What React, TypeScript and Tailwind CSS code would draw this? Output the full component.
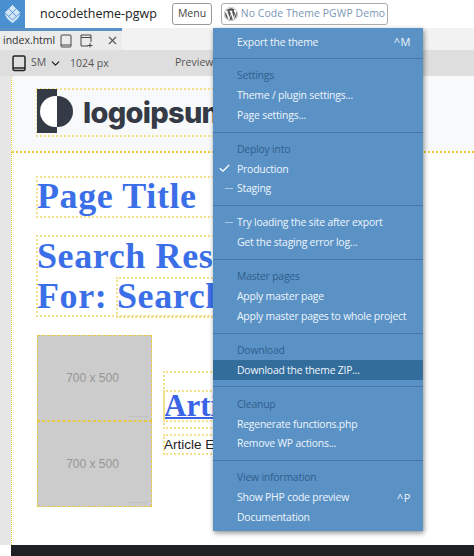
import { Check, ChevronDown, X } from "lucide-react";
import { FaWordpress } from "react-icons/fa";

type Row = { label: string; kind?: "head" | "check" | "dash" | "active"; key?: string };

const groups: Row[][] = [
  [{ label: "Export the theme", key: "^M" }],
  [
    { label: "Settings", kind: "head" },
    { label: "Theme / plugin settings..." },
    { label: "Page settings..." },
  ],
  [
    { label: "Deploy into", kind: "head" },
    { label: "Production", kind: "check" },
    { label: "Staging", kind: "dash" },
  ],
  [{ label: "Try loading the site after export", kind: "dash" }, { label: "Get the staging error log..." }],
  [
    { label: "Master pages", kind: "head" },
    { label: "Apply master page" },
    { label: "Apply master pages to whole project" },
  ],
  [{ label: "Download", kind: "head" }, { label: "Download the theme ZIP...", kind: "active" }],
  [
    { label: "Cleanup", kind: "head" },
    { label: "Regenerate functions.php" },
    { label: "Remove WP actions..." },
  ],
  [
    { label: "View information", kind: "head" },
    { label: "Show PHP code preview", key: "^P" },
    { label: "Documentation" },
  ],
];

function MenuRow({ row }: { row: Row }) {
  const color = row.kind === "head" ? "text-[#2f5f8c]" : "text-[#eef5fb]";
  const bg = row.kind === "active" ? "bg-[#336d9c]" : "";
  return (
    <div className={`relative flex h-[19.9px] items-center justify-between whitespace-nowrap pl-6 pr-3 pt-px text-[10.4px] tracking-[-0.2px] ${color} ${bg}`}>
      <span>{row.label}</span>
      {row.key && <span className="text-[11px] tracking-wider">{row.key}</span>}
      {row.kind === "check" && <Check size={13} strokeWidth={2.2} className="absolute left-[5px] top-[3px] text-white" />}
      {row.kind === "dash" && <span className="absolute left-[12px] top-[9px] h-px w-2 bg-[#a9c8e4]" />}
    </div>
  );
}

function ExportMenu() {
  return (
    <div className="absolute left-[213px] top-[28px] z-10 w-[210px] bg-[#5b92c6] pt-1 shadow-[1px_2px_5px_rgba(0,0,0,0.45)]">
      {groups.map((rows, i) => (
        <div
          key={i}
          className={i === 0 ? "pb-[6px]" : i === groups.length - 1 ? "border-t border-[#4578a8] pt-[6.5px] pb-[3.5px]" : "border-t border-[#4578a8] py-[6.5px]"}
        >
          {rows.map((row) => (
            <MenuRow key={row.label} row={row} />
          ))}
        </div>
      ))}
    </div>
  );
}

function PineLogo() {
  return (
    <div className="flex h-[28px] w-[25px] items-center justify-center bg-[#4a90d0]">
      <svg width="19" height="20" viewBox="0 0 19 20" fill="#d3e6f6" stroke="#4a90d0" strokeWidth="0.9">
        <path d="M9.5 0.5 L17.5 8.5 Q18 13.5 9.5 19.5 Q1 13.5 1.5 8.5 Z" />
        <path fill="none" d="M5.5 4.5 L13.5 12.5 M13.5 4.5 L5.5 12.5 M1.5 8.5 L9.5 16 L17.5 8.5" />
      </svg>
    </div>
  );
}

const dotted = "outline-2 -outline-offset-1 outline-dotted outline-[#f3e08a]";

function Placeholder() {
  return (
    <div className="relative flex h-[86px] w-[115px] items-center justify-center border border-dashed border-[#e8c840] bg-[#cccccc] text-xs text-[#969696]">
      <span className="-translate-x-[2px]">700 x 500</span>
      <span className="absolute bottom-[3px] right-[3px] h-px w-[20px] bg-[#c0c0c0]" />
    </div>
  );
}

function EditorPage() {
  return (
    <div className="h-[469px] overflow-hidden border-l border-dotted border-[#e8c840] bg-white font-['Liberation_Sans',sans-serif]">
      <div className="h-[75px] bg-[#f8f9fa] pl-[25px] pt-[13px]">
        <div className={`flex h-[47px] w-[300px] items-center ${dotted}`}>
          <div className="relative z-[1] flex h-[44px] w-5 shrink-0 items-center self-start bg-[#343a46]">
            <div className="ml-[3px] h-[31px] w-[17px] rounded-l-full bg-white" />
          </div>
          <div className="mb-[3px] h-[31px] w-[16px] shrink-0 rounded-r-full bg-[#343a46]" />
          <span className="ml-[10px] font-['Inter',sans-serif] text-[29px] leading-none font-extrabold tracking-tight text-[#343a46]">
            logoipsum
          </span>
        </div>
      </div>
      <div className="h-[394px] border-t-2 border-dotted border-[#ecca30] pl-[25px] pt-[24px]">
        <h1 className={`h-[40px] w-[300px] font-['Liberation_Serif',serif] text-[36px] leading-[39px] font-bold tracking-[0.6px] text-[#3b6fe8] ${dotted}`}>
          Page Title
        </h1>
        <h2 className={`mt-[19px] h-[80px] w-[300px] whitespace-nowrap font-['Liberation_Serif',serif] text-[36px] leading-[40px] font-bold tracking-[0.6px] text-[#3b6fe8] ${dotted}`}>
          Search Results
          <br />
          For: <span className={`inline-block h-[39px] leading-[37px] ${dotted}`}>Search Term</span>
        </h2>
        <div className="mt-[19px] flex">
          <div>
            <Placeholder />
            <Placeholder />
          </div>
          <div className="ml-[12px] w-[150px] pt-[37px]">
            <div className={`h-[56px] pt-[19px] ${dotted}`}>
              <a className={`block h-[30px] whitespace-nowrap font-['Liberation_Serif',serif] text-[31px] leading-[30px] font-bold text-[#3b63e8] underline decoration-2 ${dotted}`}>
                Article Title
              </a>
            </div>
            <p className={`mt-[7px] h-[19px] whitespace-nowrap text-[13.5px] leading-[19px] text-[#222] ${dotted}`}>Article Excerpt</p>
          </div>
        </div>
      </div>
    </div>
  );
}

export default function App() {
  return (
    <div className="relative h-[556px] w-[474px] overflow-hidden bg-white font-['Open_Sans','Noto_Sans',sans-serif] text-[#333]">
      <header className="flex h-[28px] items-center">
        <PineLogo />
        <span className="ml-[15px] w-[116px] whitespace-nowrap text-[12.5px] text-[#222]">nocodetheme-pgwp</span>
        <button className="ml-[16px] flex h-[22px] w-[40px] items-center justify-center rounded-[3px] border border-[#999] text-[10.5px] text-[#444]">
          Menu
        </button>
        <button className="ml-[9px] flex h-[22px] w-[167px] items-center justify-center gap-[3px] whitespace-nowrap rounded-[3px] border border-[#aaa] text-[10.4px] tracking-[0.1px] text-[#7b96b4]">
          <FaWordpress size={14} className="shrink-0 text-[#555]" />
          No Code Theme PGWP Demo
        </button>
      </header>

      <div className="flex h-[22px] bg-[#f2f2f2]">
        <div className="flex w-[122px] items-center border-t-[3px] border-[#5b92c6] bg-[#ebebeb] pl-[3px] text-[10.5px] text-[#333]">
          <span className="w-[49px]">index.html</span>
          <svg className="ml-[8px]" width="12" height="14" viewBox="0 0 12 14" fill="none" stroke="#444" strokeWidth="1">
            <rect x="1" y="1" width="10" height="12" rx="1" />
            <path d="M1 11h10" />
          </svg>
          <svg className="ml-[8px]" width="14" height="14" viewBox="0 0 14 14" fill="none" stroke="#444" strokeWidth="1">
            <path d="M8 12H1V1h10v7M1 3.5h10M10 9v4.5M7.5 11.5h5" />
          </svg>
          <X size={13} className="ml-[12px] text-[#555]" />
        </div>
      </div>

      <div className="flex h-[26px] items-center bg-[#dedede] pl-[12px] text-[10.5px] text-[#555]">
        <svg width="14" height="17" viewBox="0 0 14 17" fill="none" stroke="#222" strokeWidth="1.5">
          <rect x="1" y="1" width="12" height="14.5" rx="1.5" />
          <path d="M1 13h12" />
        </svg>
        <span className="ml-[5px] w-[14px]">SM</span>
        <ChevronDown size={13} strokeWidth={2.4} className="ml-[4px] text-[#222]" />
        <span className="ml-[8px] mt-[2px] w-[36px] whitespace-nowrap">1024 px</span>
        <span className="ml-[69px]">Preview...</span>
      </div>

      <div className="bg-[#e6e6e6] pl-[11px]">
        <EditorPage />
      </div>
      <div className="ml-[11px] h-[11px] bg-[#1d2124]" />

      <ExportMenu />
    </div>
  );
}
